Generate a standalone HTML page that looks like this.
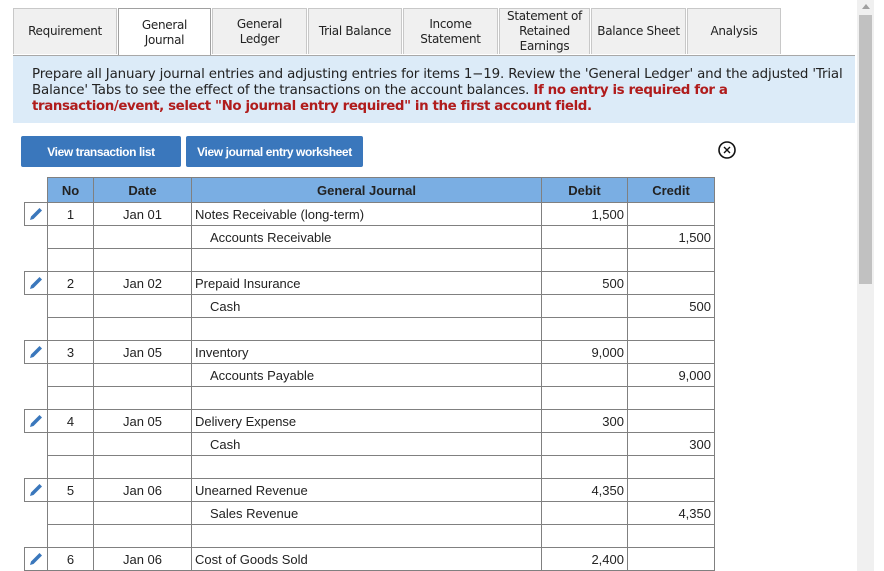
<!DOCTYPE html>
<html><head><style>
body{margin:0;width:884px;height:571px;overflow:hidden;background:#fff;font-family:"Liberation Sans",Arial,sans-serif;position:relative}
.tab{position:absolute;top:8px;height:46px;border:1px solid #c8c8c8;border-bottom:none;background:#f0f0f0;font-family:"DejaVu Sans",Verdana,sans-serif;font-size:12px;letter-spacing:-0.3px;color:#222;display:flex;align-items:center;justify-content:center;text-align:center;line-height:15px;box-sizing:border-box}
.tab.act{background:#fff;height:48px;border-color:#a0a0a0}
.line{position:absolute;left:13px;top:55px;width:842px;height:1px;background:#a8a8a8}
.info{position:absolute;left:13px;top:56px;width:842px;height:67px;background:#dcebf8;box-sizing:border-box;padding:11px 0 0 19px;font-family:"DejaVu Sans",Verdana,sans-serif;font-size:13.4px;letter-spacing:-0.15px;line-height:16px;color:#222;white-space:nowrap}
.info b{color:#b01c1c;letter-spacing:-0.4px}
.btn{position:absolute;top:136px;height:31px;background:#3a77bc;color:#fff;font-weight:bold;font-size:12px;letter-spacing:-0.4px;display:flex;align-items:center;justify-content:center;border-radius:2px}
table{position:absolute;left:47px;top:177px;border-collapse:collapse;font-size:13px;color:#222}
td,th{border:1px solid #808080;height:23px;padding:0 3px;box-sizing:border-box}
th{background:#7aaee3;font-size:13px;height:25px}
.pen{position:absolute;left:24px;width:23px;height:24px;border:1px solid #808080;border-right:none;box-sizing:border-box;display:flex;align-items:center;justify-content:center}
</style></head><body>
<div class="tab" style="left:13px;width:104px">Requirement</div>
<div class="tab act" style="left:118px;width:93px">General<br>Journal</div>
<div class="tab" style="left:212px;width:95px">General<br>Ledger</div>
<div class="tab" style="left:308px;width:94px">Trial Balance</div>
<div class="tab" style="left:403px;width:95px">Income<br>Statement</div>
<div class="tab" style="left:499px;width:91px">Statement of<br>Retained<br>Earnings</div>
<div class="tab" style="left:591px;width:95px">Balance Sheet</div>
<div class="tab" style="left:687px;width:94px">Analysis</div>
<div class="line"></div>
<div class="info">Prepare all January journal entries and adjusting entries for items 1−19. Review the 'General Ledger' and the adjusted 'Trial<br>Balance' Tabs to see the effect of the transactions on the account balances. <b>If no entry is required for a<br>transaction/event, select "No journal entry required" in the first account field.</b></div>
<div class="btn" style="left:21px;width:160px">View transaction list</div>
<div class="btn" style="left:186px;width:177px">View journal entry worksheet</div>
<svg style="position:absolute;left:717px;top:140px" width="20" height="20" viewBox="0 0 20 20"><circle cx="10" cy="10" r="8" fill="none" stroke="#111" stroke-width="1.6"/><path d="M7 7L13 13M13 7L7 13" stroke="#111" stroke-width="1.4"/></svg>
<div style="position:absolute;left:857px;top:0;width:17px;height:571px;background:#f0f0f0"></div>
<div style="position:absolute;left:859px;top:15px;width:13px;height:269px;background:#c1c1c1"></div>
<div style="position:absolute;left:862px;top:4px;width:0;height:0;border-left:4px solid transparent;border-right:4px solid transparent;border-bottom:5px solid #a0a0a0"></div>
<table>
<tr><th style="width:46px">No</th><th style="width:98px">Date</th><th style="width:350px">General Journal</th><th style="width:86px">Debit</th><th style="width:87px">Credit</th></tr>
<tr><td align=center>1</td><td align=center>Jan 01</td><td>Notes Receivable (long-term)</td><td align=right>1,500</td><td></td></tr>
<tr><td></td><td></td><td style="padding-left:18px">Accounts Receivable</td><td></td><td align=right>1,500</td></tr>
<tr><td></td><td></td><td></td><td></td><td></td></tr>
<tr><td align=center>2</td><td align=center>Jan 02</td><td>Prepaid Insurance</td><td align=right>500</td><td></td></tr>
<tr><td></td><td></td><td style="padding-left:18px">Cash</td><td></td><td align=right>500</td></tr>
<tr><td></td><td></td><td></td><td></td><td></td></tr>
<tr><td align=center>3</td><td align=center>Jan 05</td><td>Inventory</td><td align=right>9,000</td><td></td></tr>
<tr><td></td><td></td><td style="padding-left:18px">Accounts Payable</td><td></td><td align=right>9,000</td></tr>
<tr><td></td><td></td><td></td><td></td><td></td></tr>
<tr><td align=center>4</td><td align=center>Jan 05</td><td>Delivery Expense</td><td align=right>300</td><td></td></tr>
<tr><td></td><td></td><td style="padding-left:18px">Cash</td><td></td><td align=right>300</td></tr>
<tr><td></td><td></td><td></td><td></td><td></td></tr>
<tr><td align=center>5</td><td align=center>Jan 06</td><td>Unearned Revenue</td><td align=right>4,350</td><td></td></tr>
<tr><td></td><td></td><td style="padding-left:18px">Sales Revenue</td><td></td><td align=right>4,350</td></tr>
<tr><td></td><td></td><td></td><td></td><td></td></tr>
<tr><td align=center>6</td><td align=center>Jan 06</td><td>Cost of Goods Sold</td><td align=right>2,400</td><td></td></tr>
</table>
<div class="pen" style="top:202px"><svg width="16" height="16" viewBox="0 0 16 16"><path d="M2 14L3 10.5L11.5 2L14 4.5L5.5 13Z" fill="#3a77bc"/></svg></div>
<div class="pen" style="top:271px"><svg width="16" height="16" viewBox="0 0 16 16"><path d="M2 14L3 10.5L11.5 2L14 4.5L5.5 13Z" fill="#3a77bc"/></svg></div>
<div class="pen" style="top:340px"><svg width="16" height="16" viewBox="0 0 16 16"><path d="M2 14L3 10.5L11.5 2L14 4.5L5.5 13Z" fill="#3a77bc"/></svg></div>
<div class="pen" style="top:409px"><svg width="16" height="16" viewBox="0 0 16 16"><path d="M2 14L3 10.5L11.5 2L14 4.5L5.5 13Z" fill="#3a77bc"/></svg></div>
<div class="pen" style="top:478px"><svg width="16" height="16" viewBox="0 0 16 16"><path d="M2 14L3 10.5L11.5 2L14 4.5L5.5 13Z" fill="#3a77bc"/></svg></div>
<div class="pen" style="top:547px"><svg width="16" height="16" viewBox="0 0 16 16"><path d="M2 14L3 10.5L11.5 2L14 4.5L5.5 13Z" fill="#3a77bc"/></svg></div>
</body></html>
